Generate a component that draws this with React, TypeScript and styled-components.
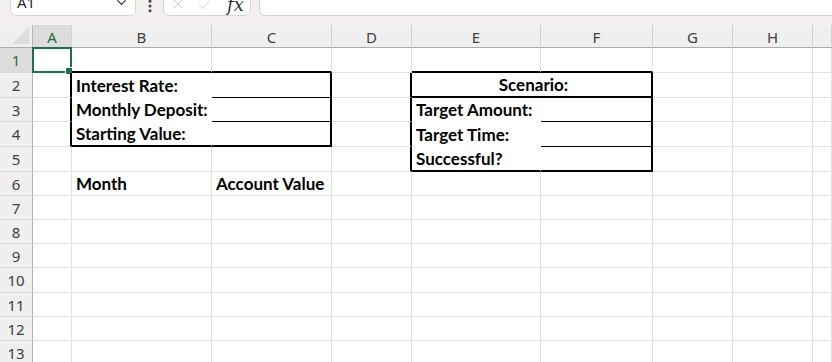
import React from "react";
import styled, { createGlobalStyle } from "styled-components";
import { ChevronDown, X, Check, EllipsisVertical } from "lucide-react";

const GlobalStyle = createGlobalStyle`
  html, body {
    margin: 0;
    padding: 0;
    background: #ffffff;
    overflow: hidden;
  }
  body {
    width: 832px;
    height: 362px;
  }
`;

type Edge = "grid" | "none" | "thin" | "thick";

const COLS = ["A", "B", "C", "D", "E", "F", "G", "H", "I"];
const COL_WIDTHS = "33px 39px 140px 120px 80px 129px 112px 80px 80px 1fr";
const ROW_HEIGHTS = [25, 25, 24, 25, 25, 24, 24, 24, 24, 25, 24, 24, 24];

// borders that differ from the plain gridline, keyed by cell
const BORDERS: Record<string, { r?: Edge; b?: Edge }> = {
  B1: { b: "thick" },
  C1: { b: "thick" },
  A2: { r: "thick" },
  A3: { r: "thick" },
  A4: { r: "thick" },
  B2: { r: "none", b: "none" },
  B3: { r: "none", b: "none" },
  B4: { r: "none", b: "thick" },
  C2: { r: "thick", b: "thin" },
  C3: { r: "thick", b: "thin" },
  C4: { r: "thick", b: "thick" },
  E1: { b: "thick" },
  F1: { b: "thick" },
  D2: { r: "thick" },
  D3: { r: "thick" },
  D4: { r: "thick" },
  D5: { r: "thick" },
  E2: { r: "thick", b: "thick" },
  E3: { r: "none", b: "none" },
  E4: { r: "none", b: "none" },
  E5: { r: "none", b: "thick" },
  F3: { r: "thick", b: "thin" },
  F4: { r: "thick", b: "thin" },
  F5: { r: "thick", b: "thick" },
};

const VALUES: Record<string, { text: string; span?: number; center?: boolean }> = {
  B2: { text: "Interest Rate:" },
  B3: { text: "Monthly Deposit:" },
  B4: { text: "Starting Value:" },
  E2: { text: "Scenario:", span: 2, center: true },
  E3: { text: "Target Amount:" },
  E4: { text: "Target Time:" },
  E5: { text: "Successful?" },
  B6: { text: "Month" },
  C6: { text: "Account Value" },
};

const edgeCss = (e: Edge = "grid") => {
  switch (e) {
    case "thick":
      return "2px solid #000000";
    case "thin":
      return "1px solid #000000";
    case "none":
      return "1px solid #ffffff";
    default:
      return "1px solid #e1e1e1";
  }
};

const TopBar = styled.div`
  height: 25px;
  background: #f3f0ef;
  display: flex;
  align-items: flex-start;
  padding-left: 10px;
  box-sizing: border-box;
  overflow: hidden;
`;

const NameBox = styled.div`
  width: 126px;
  height: 28px;
  margin-top: -12px;
  box-sizing: border-box;
  background: #ffffff;
  border: 1px solid #d6d6d6;
  border-radius: 6px;
  display: flex;
  align-items: center;
  justify-content: space-between;
  padding: 0 6px 0 6px;
  font-family: "Noto Sans", sans-serif;
  font-size: 15px;
  color: #262626;
`;

const Dots = styled.div`
  width: 27px;
  height: 20px;
  margin-top: -4px;
  display: flex;
  align-items: center;
  justify-content: center;
  color: #444444;
`;

const FxBox = styled.div`
  width: 88px;
  height: 28px;
  margin-top: -12px;
  box-sizing: border-box;
  background: #ffffff;
  border: 1px solid #d6d6d6;
  border-radius: 6px;
  display: flex;
  align-items: center;
  gap: 10px;
  padding: 4px 0 0 6px;
  color: #c4c4c4;
`;

const FxLabel = styled.span`
  font-family: "DejaVu Serif", "Liberation Serif", serif;
  font-style: italic;
  font-size: 18px;
  line-height: 1;
  color: #333333;
  margin: 2px 0 0 4px;
`;

const FormulaInput = styled.div`
  flex: 1;
  height: 28px;
  margin: -12px 0 0 8px;
  box-sizing: border-box;
  background: #ffffff;
  border: 1px solid #d6d6d6;
  border-right: none;
  border-radius: 6px 0 0 6px;
`;

const Sheet = styled.div`
  display: grid;
  grid-template-columns: ${COL_WIDTHS};
  grid-template-rows: 23px ${ROW_HEIGHTS.map((h) => `${h}px`).join(" ")};
`;

const Corner = styled.div`
  background: #efefef;
  border-right: 1px solid #b4b4b4;
  border-bottom: 1px solid #ababab;
  box-sizing: border-box;
  display: flex;
  align-items: flex-end;
  justify-content: flex-end;
  padding: 0 3px 3px 0;
`;

const ColHeader = styled.div<{ $active?: boolean }>`
  background: ${(p) => (p.$active ? "#dcdcdc" : "#efefef")};
  color: ${(p) => (p.$active ? "#1e6e42" : "#404040")};
  border-right: 1px solid #d4d4d4;
  border-bottom: 1px solid #ababab;
  box-sizing: border-box;
  display: flex;
  align-items: center;
  justify-content: center;
  font-family: "Noto Sans", sans-serif;
  font-size: 15px;
  padding-top: 1px;
`;

const RowHeader = styled.div<{ $active?: boolean }>`
  background: ${(p) => (p.$active ? "#dcdcdc" : "#efefef")};
  color: ${(p) => (p.$active ? "#1e6e42" : "#404040")};
  border-right: 1px solid #b4b4b4;
  border-bottom: 1px solid #dadada;
  box-sizing: border-box;
  display: flex;
  align-items: center;
  justify-content: center;
  font-family: "Noto Sans", sans-serif;
  font-size: 15px;
`;

const Cell = styled.div<{ $right?: Edge; $bottom?: Edge; $span?: number; $center?: boolean }>`
  position: relative;
  grid-column: span ${(p) => p.$span ?? 1};
  border-right: ${(p) => edgeCss(p.$right)};
  border-bottom: ${(p) => edgeCss(p.$bottom)};
  box-sizing: border-box;
  display: flex;
  align-items: flex-end;
  justify-content: ${(p) => (p.$center ? "center" : "flex-start")};
  padding: 0 0 3px 4px;
  font-family: Lato, "Liberation Sans", sans-serif;
  font-weight: 700;
  font-size: 17px;
  line-height: 1;
  color: #000000;
  white-space: nowrap;
`;

const Selection = styled.div`
  position: absolute;
  top: -1px;
  left: -1px;
  right: -1px;
  bottom: -1px;
  border: 2px solid #1e7145;
  pointer-events: none;
`;

const Handle = styled.div`
  position: absolute;
  right: -3px;
  bottom: -4px;
  width: 6px;
  height: 6px;
  background: #1e7145;
  border: 1px solid #ffffff;
  box-sizing: content-box;
`;

const App = () => {
  return (
    <>
      <GlobalStyle />
      <TopBar>
        <NameBox>
          <span>A1</span>
          <ChevronDown size={15} strokeWidth={2} color="#333333" />
        </NameBox>
        <Dots>
          <EllipsisVertical size={16} strokeWidth={2.6} />
        </Dots>
        <FxBox>
          <X size={16} strokeWidth={1.2} />
          <Check size={17} strokeWidth={1.2} />
          <FxLabel>fx</FxLabel>
        </FxBox>
        <FormulaInput />
      </TopBar>
      <Sheet>
        <Corner>
          <svg width="17" height="17" viewBox="0 0 17 17">
            <polygon points="17,0 17,17 0,17" fill="#dcdcdc" />
          </svg>
        </Corner>
        {COLS.map((c) => (
          <ColHeader key={c} $active={c === "A"}>
            {c === "I" ? null : c}
          </ColHeader>
        ))}
        {ROW_HEIGHTS.map((_, i) => {
          const row = i + 1;
          return (
            <React.Fragment key={row}>
              <RowHeader $active={row === 1}>{row}</RowHeader>
              {COLS.map((c) => {
                const key = `${c}${row}`;
                if (key === "F2") return null;
                const b = BORDERS[key] ?? {};
                const v = VALUES[key];
                return (
                  <Cell key={key} $right={b.r} $bottom={b.b} $span={v?.span} $center={v?.center}>
                    {v?.text}
                    {key === "A1" && (
                      <Selection>
                        <Handle />
                      </Selection>
                    )}
                  </Cell>
                );
              })}
            </React.Fragment>
          );
        })}
      </Sheet>
    </>
  );
};

export default App;
